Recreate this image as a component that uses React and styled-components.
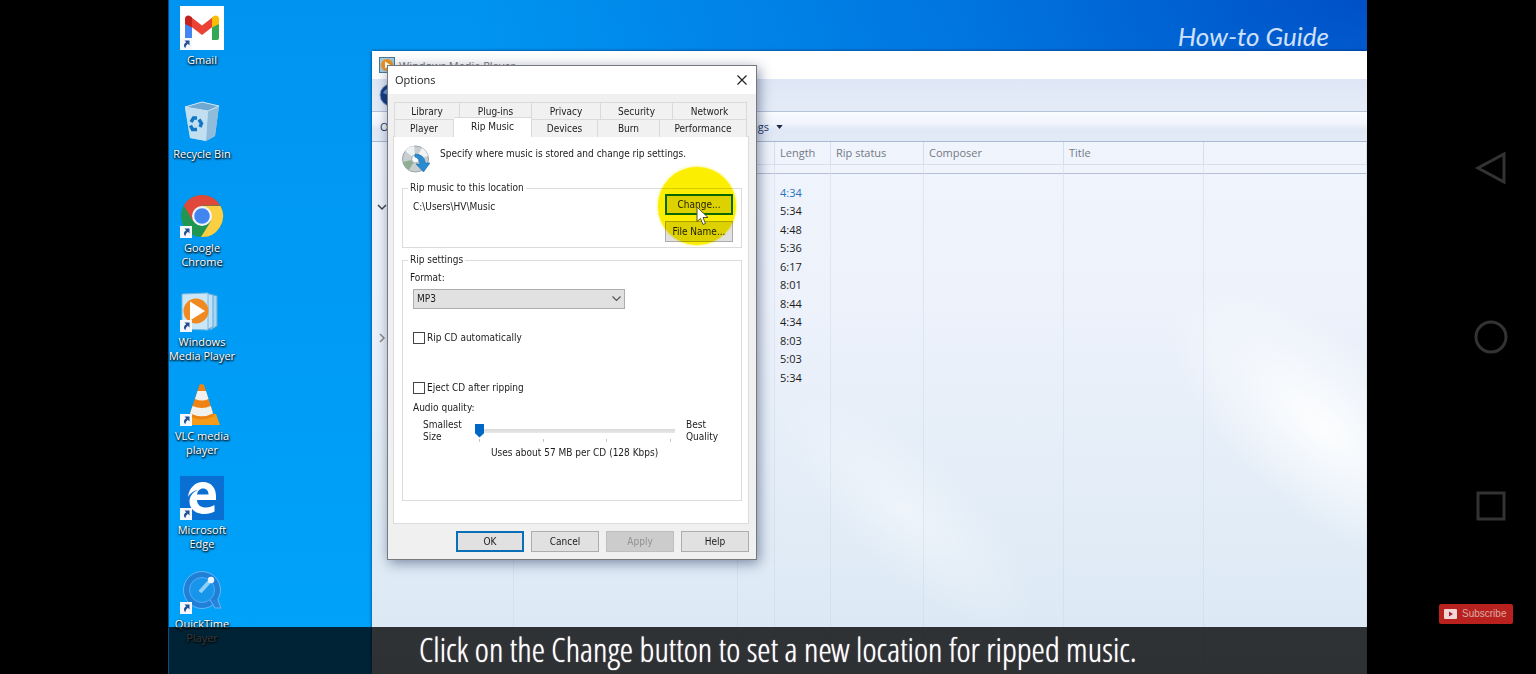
import React from "react";
import styled, { createGlobalStyle, css } from "styled-components";

const GlobalStyle = createGlobalStyle`
  *, *::before, *::after { box-sizing: border-box; }
  body { margin: 0; background: #000; font-family: "Open Sans", "Liberation Sans", sans-serif; }
  button, select, input { font: inherit; margin: 0; }
`;

const uiFont = css`
  font-family: "DejaVu Sans Condensed", "Liberation Sans", sans-serif;
  font-size: 10px;
  line-height: 14px;
  color: #1c1c1c;
`;

/* ---------- page ---------- */

const Screen = styled.div`
  display: grid;
  grid-template-columns: 168px minmax(0, 1fr) 169px;
  min-height: 100vh;
  background: #000;
`;

const Desktop = styled.main`
  grid-column: 2;
  position: relative;
  overflow: hidden;
  border-left: 1px solid #0a4c80;
  background:
    radial-gradient(ellipse 900px 420px at 100% 0, #0050c6, rgba(0, 104, 216, 0.7) 45%, rgba(0, 140, 236, 0) 100%),
    linear-gradient(#0094f0, #00a3fa);
`;

const IconColumn = styled.ul`
  display: flex;
  flex-direction: column;
  width: 66px;
  margin: 0;
  padding: 0;
  list-style: none;
`;

const Shortcut = styled.a`
  display: flex;
  flex-direction: column;
  align-items: center;
  gap: 3px;
  height: 94px;
  padding-top: 6px;
  color: #fff;
  font: 11px/14px "Open Sans", sans-serif;
  text-align: center;
  text-decoration: none;
  text-shadow: 0 1px 2px #000, 1px 1px 2px rgba(0, 0, 0, 0.8);

  svg { flex: none; width: 44px; height: 44px; }
  span { width: 76px; }
`;

const Watermark = styled.div`
  position: absolute;
  top: 20px;
  right: 38px;
  color: #cfe0fb;
  font: italic 26px/32px Lato, sans-serif;
`;

const Caption = styled.p`
  position: absolute;
  z-index: 5;
  inset: auto 0 0;
  margin: 0;
  padding: 2px 0 5px 250px;
  background: rgba(0, 0, 0, 0.79);
  color: #fff;
  font-family: "Open Sans Condensed Light", "Open Sans Condensed", "Roboto Condensed", sans-serif;
  font-size: 34px;
  font-weight: 300;
  line-height: 40px;
  text-shadow: 0 0 1px #fff;
  white-space: nowrap;
`;

/* ---------- media player window ---------- */

const PlayerWindow = styled.section`
  position: absolute;
  inset: 51px 0 0 203px;
  display: flex;
  flex-direction: column;
  overflow: hidden;
  background: linear-gradient(#f2f5fd, #edf2fb 40%, #dae8f4);
  box-shadow: 0 0 3px rgba(0, 30, 90, 0.8);
`;

const Glow = styled.div`
  position: absolute;
  top: ${(p) => p.$top}px;
  left: ${(p) => p.$left}px;
  width: ${(p) => p.$width}px;
  height: ${(p) => p.$height}px;
  background: radial-gradient(closest-side, rgba(255, 255, 255, ${(p) => p.$strength}), rgba(255, 255, 255, 0));
  transform: rotate(42deg);
`;

const PlayerTitle = styled.header`
  display: flex;
  flex: none;
  align-items: center;
  gap: 4px;
  height: 28px;
  padding: 0 7px;
  background: #fff;
  color: #777;
  font-size: 11px;

  svg { width: 16px; height: 16px; }
`;

const PlayerNav = styled.div`
  display: flex;
  flex: none;
  align-items: center;
  height: 33px;
  padding-left: 7px;
  border-bottom: 1px solid #b4c2d8;
  background: linear-gradient(#dfe6f5, #e4ecf8);

  svg { width: 24px; height: 24px; }
`;

const PlayerCommands = styled.div`
  display: flex;
  flex: none;
  height: 30px;
  border-bottom: 1px solid #a9b8ce;
  background: linear-gradient(#fafcff, #f0f4fc 40%, #e1e8f5 60%, #e3eaf7);
`;

const CommandGroup = styled.div`
  display: flex;
  align-items: center;
  justify-content: space-between;
  width: 411px;
  padding-left: 8px;
`;

const Command = styled.button`
  display: flex;
  align-items: center;
  gap: 7px;
  padding: 0;
  border: 0;
  background: none;
  color: #26365c;
  font-size: 11px;

  svg { width: 7px; height: 4px; }
`;

const PlayerBody = styled.div`
  position: relative;
  display: flex;
  flex: 1;
  min-height: 0;
  overflow: hidden;
`;

const Sidebar = styled.div`
  display: flex;
  flex-direction: column;
  gap: 119px;
  width: 142px;
  padding: 59px 0 0 4px;
  border-right: 1px solid #d6e2ef;

  svg { width: 12px; height: 12px; }
`;

const TrackTable = styled.table`
  flex: 1;
  width: 0;
  table-layout: fixed;
  border-collapse: separate;
  border-spacing: 0;
  color: #1b1b1b;
  font-family: "Open Sans", sans-serif;
  font-size: 11px;
  line-height: 18px;
  text-align: left;
`;

const HeadCell = styled.th`
  width: ${(p) => (p.$width ? `${p.$width}px` : "auto")};
  height: 23px;
  padding: 0 5px;
  border-right: 1px solid #d3deee;
  border-bottom: 1px solid #d6dfec;
  color: #737983;
  font-weight: 400;
`;

const BodyCell = styled.td`
  height: ${(p) => p.$height};
  padding: 0 5px;
  border-right: 1px solid rgba(190, 208, 228, 0.35);
  color: ${(p) => (p.$active ? "#2673c0" : "inherit")};
  ${(p) => p.$ruled && "border-bottom: 1px solid #b3c0d6;"}
`;

/* ---------- options dialog ---------- */

const Dialog = styled.section`
  position: absolute;
  z-index: 2;
  top: 65px;
  left: 218px;
  width: 370px;
  border: 1px solid #77797c;
  background: #f0f0f0;
  box-shadow: 2px 3px 12px rgba(20, 40, 80, 0.5);
  ${uiFont}
`;

const DialogTitle = styled.header`
  display: flex;
  align-items: center;
  justify-content: space-between;
  height: 28px;
  padding: 0 8px 0 7px;
  background: #fff;

  h1 { margin: 0; font: 11px/16px "Open Sans", sans-serif; }
`;

const CloseButton = styled.button`
  display: flex;
  padding: 0;
  border: 0;
  background: none;

  svg { width: 12px; height: 12px; }
`;

const Tabs = styled.div`
  padding: 8px 9px 0 6px;
`;

const TabRow = styled.div`
  display: grid;
  grid-template-columns: ${(p) => p.$columns};
  height: 17px;
`;

const Tab = styled.button`
  padding: 0;
  border: 1px solid #dadada;
  border-width: 1px 1px 0 0;
  background: #f1f1f1;
  color: #1c1c1c;
  line-height: 15px;

  &:first-child { border-left-width: 1px; }
  ${(p) =>
    p.$selected &&
    css`
      position: relative;
      height: 20px;
      margin-top: -2px;
      padding-bottom: 3px;
      background: #fff;
    `}
`;

const Panel = styled.div`
  margin: 0 7px 0 5px;
  padding: 8px 6px 22px 8px;
  border: 1px solid #dcdcdc;
  background: #fff;
`;

const Intro = styled.div`
  display: flex;
  gap: 10px;
  height: 37px;

  svg { width: 28px; height: 28px; }
  p { margin: 2px 0 0; }
`;

const Group = styled.fieldset`
  margin: 0 0 6px;
  padding: ${(p) => p.$padding};
  border: 1px solid #dcdcdc;

  &:last-child { margin-bottom: 0; }
  legend { margin-left: 5px; padding: 0 2px; line-height: 12px; }
`;

const Location = styled.div`
  display: flex;
  justify-content: space-between;
  p { margin: 6px 0 0 10px; }
`;

const ButtonStack = styled.div`
  position: relative;
  display: flex;
  flex-direction: column;
  gap: 6px;
`;

const PushButton = styled.button`
  width: 68px;
  height: 21px;
  padding: 0;
  border: ${(p) => (p.$primary ? "2px solid #0b6fb8" : "1px solid #adadad")};
  background: #e1e1e1;
  color: #1c1c1c;

  &:disabled { border-color: #bfbfbf; background: #cccccc; color: #929292; }
`;

const Highlight = styled.span`
  position: absolute;
  top: -27px;
  left: -7px;
  width: 78px;
  height: 78px;
  border-radius: 50%;
  background: #fbee00;
  box-shadow: 0 0 3px #fbee00;
  mix-blend-mode: multiply;
  pointer-events: none;
`;

const Pointer = styled.svg`
  position: absolute;
  top: 12px;
  left: 31px;
  width: 13px;
  height: 20px;
`;

const FormatField = styled.div`
  display: flex;
  flex-direction: column;
  gap: 4px;
  margin-bottom: 22px;

  label { margin-left: 7px; }
`;

const SelectBox = styled.div`
  position: relative;
  width: 212px;
  margin-left: 10px;

  select {
    appearance: none;
    display: block;
    width: 100%;
    height: 20px;
    padding: 0 3px;
    border: 1px solid #adadad;
    border-radius: 0;
    background: #e1e1e1;
    color: #1c1c1c;
  }
  svg { position: absolute; top: 7px; right: 4px; width: 9px; height: 6px; pointer-events: none; }
`;

const CheckRow = styled.label`
  display: flex;
  align-items: center;
  gap: 2px;
  height: 14px;
  margin: 0 0 ${(p) => p.$after}px 10px;

  input {
    appearance: none;
    width: 12px;
    height: 12px;
    border: 1px solid #444;
    background: #fff;
  }
  input:checked { background: #0078d7; }
`;

const QualityLabel = styled.label`
  display: block;
  margin: 0 0 4px 10px;
`;

const QualityRow = styled.div`
  display: grid;
  grid-template-columns: 42px 201px auto;
  gap: 0 10px;
  margin-left: 20px;
  line-height: 12px;

  > span { white-space: pre-line; }
`;

const Slider = styled.input`
  appearance: none;
  display: block;
  width: 200px;
  height: 15px;
  margin: 4px 0 0;
  background: linear-gradient(#d9d9d9, #e9e9e9) center / 100% 4px no-repeat;

  &::-webkit-slider-thumb {
    appearance: none;
    width: 9px;
    height: 14px;
    background: #0067c5;
    clip-path: polygon(0 0, 100% 0, 100% 70%, 50% 100%, 0 70%);
  }
`;

const Ticks = styled.div`
  display: flex;
  justify-content: space-between;
  width: 192px;
  margin: 1px 0 0 4px;

  i { width: 1px; height: 3px; background: #c4c4c4; }
`;

const Estimate = styled.p`
  margin: 3px 0 0 88px;
`;

const DialogFooter = styled.footer`
  display: flex;
  justify-content: flex-end;
  gap: 7px;
  padding: 7px 7px 7px 0;
`;

/* ---------- phone navigation ---------- */

const PhoneBar = styled.aside`
  position: relative;
  grid-column: 3;
`;

const PhoneNav = styled.nav`
  display: grid;
  grid-template-rows: repeat(3, 1fr);
  justify-items: end;
  align-items: center;
  height: 100%;
  padding: 84px 28px;
`;

const NavButton = styled.button`
  display: flex;
  padding: 0;
  border: 0;
  background: none;

  svg { width: 34px; height: 34px; fill: none; stroke: #333; stroke-width: 3; }
`;

const Subscribe = styled.button`
  position: absolute;
  right: 23px;
  bottom: 50px;
  display: flex;
  align-items: center;
  gap: 5px;
  width: 74px;
  height: 20px;
  padding: 0 5px;
  border: 0;
  border-radius: 2px;
  background: #b8211d;
  color: #dba9a7;
  font: 10px/20px "Liberation Sans", sans-serif;

  svg { width: 13px; height: 10px; }
`;

/* ---------- drawings ---------- */

const LinkArrow = () => (
  <g>
    <rect x="0" y="32" width="12" height="12" fill="#f4f8fc" />
    <path d="M4.500 34.500H9.500V39.500L7.800 37.800Q5.600 39.300 5.300 42.300Q2.200 38.800 6.200 36.200Z" fill="#1f4f94" />
  </g>
);

const GmailIcon = () => (
  <svg viewBox="0 0 44 44">
    <rect width="44" height="44" fill="#fff" />
    <path d="M5 17L12 21V34H7Q5 34 5 32Z" fill="#4285f4" />
    <path d="M32 21L39 17V32Q39 34 37 34H32Z" fill="#34a853" />
    <path d="M11 11L22 19.500L33 11V20.500L22 29L11 20.500Z" fill="#ea4335" />
    <path d="M5 18V13Q5 9.500 8.500 9.500Q10 9.500 12 11.500V21.500Z" fill="#c5221f" />
    <path d="M39 18V13Q39 9.500 35.500 9.500Q34 9.500 32 11.500V21.500Z" fill="#fbbc04" />
    <LinkArrow />
  </svg>
);

const BinIcon = () => (
  <svg viewBox="0 0 44 44">
    <path d="M5 7L22 2L39 6L35 36L26 41L10 38Z" fill="#bcdcf0" opacity=".9" />
    <path d="M28 11L39 6L35 36L26 41Z" fill="#90bcdc" />
    <path d="M5 7L22 2L39 6L28 11Z" fill="#6fa9d2" stroke="#cfe6f4" strokeWidth="1" />
    <path d="M5 8L28 11L26 41L10 38Z" fill="#c6e0f0" opacity=".85" />
    <g fill="none" stroke="#1176c4" strokeWidth="3.400">
      <path d="M11 22L13.500 18H17" />
      <path d="M19 19.500L21.500 23.500L20 27" />
      <path d="M17 29.500H12.500L10.500 25.500" />
    </g>
  </svg>
);

const ChromeIcon = () => (
  <svg viewBox="0 0 44 44">
    <circle cx="22" cy="22" r="21" fill="#219653" />
    <path d="M22 22L3.800 11.500A21 21 0 0 1 40.200 11.500H22Z" fill="#e0483c" />
    <path d="M22 12H40.500A21 21 0 0 1 21 43L31 27Z" fill="#fcce41" />
    <path d="M3.800 11.500L13 27L22 12Z" fill="#e0483c" />
    <circle cx="22" cy="22" r="10" fill="#f2f5f8" />
    <circle cx="22" cy="22" r="7.800" fill="#4385f0" />
    <LinkArrow />
  </svg>
);

const MediaIcon = () => (
  <svg viewBox="0 0 44 44">
    <path d="M30 6L37 8V38L30 42Z" fill="#a8d5f2" stroke="#5fa9dc" />
    <path d="M26 5L33 7V39L26 42Z" fill="#bfe0f5" stroke="#5fa9dc" />
    <path d="M2 6L28 5V42L2 41Z" fill="#cbe6f6" stroke="#77b8e2" />
    <circle cx="16" cy="23" r="12.500" fill="#f08a20" />
    <path d="M10 13.500L25 23L10 32.500Z" fill="#fff" />
    <LinkArrow />
  </svg>
);

const VlcIcon = () => (
  <svg viewBox="0 0 44 44">
    <path d="M12 32H36L40 43H9Z" fill="#f59c1c" />
    <path d="M19.500 3Q21.500 1 24 3L34 34Q22 41 9 34Z" fill="#ee8312" />
    <path d="M17.500 9H26L28.500 17Q22 20 15 17Z" fill="#f1f1ef" />
    <path d="M12.500 24Q22 28 30.800 24L33 31.500Q22 37 10 31.500Z" fill="#f1f1ef" />
    <LinkArrow />
  </svg>
);

const EdgeIcon = () => (
  <svg viewBox="0 0 44 44">
    <rect width="44" height="44" fill="#0a6fd2" />
    <path
      d="M8 21C9 12 15 6 23 6C32 6 36 13 36 20V24H17C17 29 21 31.500 26 31.500C29.500 31.500 32 30.500 34.500 29V35.500C32 37 28.500 38 24.500 38C15.500 38 9.500 33 9.500 25.500C9.500 20 13 16 18 14C13.500 14.500 10 17.500 8 21ZM17 18.500H28.500C28.500 15 26.500 12.500 23 12.500C20 12.500 17.500 15 17 18.500Z"
      fill="#fff"
    />
    <LinkArrow />
  </svg>
);

const QuickTimeIcon = () => (
  <svg viewBox="0 0 44 44">
    <circle cx="22" cy="20" r="15.500" fill="#1695ea" stroke="#2080d8" strokeWidth="6" />
    <circle cx="22" cy="20" r="18.500" fill="none" stroke="#6ab5f2" />
    <circle cx="22" cy="20" r="12.500" fill="none" stroke="#5aaaf0" />
    <path d="M30 30L35 38H41L38 30" fill="#2585dc" stroke="#6ab5f2" />
    <path d="M20 22L29 12" stroke="#8fd0fa" strokeWidth="4" />
    <circle cx="31" cy="10" r="3.200" fill="#e8f7ff" />
    <LinkArrow />
  </svg>
);

const PlayerLogo = () => (
  <svg viewBox="0 0 16 16">
    <rect x=".5" y=".5" width="15" height="15" fill="#a9c9dd" stroke="#4b7896" />
    <circle cx="8" cy="8" r="6" fill="#e8921f" />
    <path d="M6 4.500L11.500 8L6 11.500Z" fill="#fff" />
  </svg>
);

const BackOrb = () => (
  <svg viewBox="0 0 24 24">
    <circle cx="12" cy="12" r="11" fill="#143a80" stroke="#8aa2c8" />
    <path d="M4 10A9 9 0 0 1 20 10Q12 14 4 10Z" fill="#6f94cc" />
  </svg>
);

const DiscIcon = () => (
  <svg viewBox="0 0 28 28">
    <circle cx="13.500" cy="14" r="13" fill="#c9ced0" stroke="#9aa2a6" />
    <path d="M13.500 14L3 6A13 13 0 0 1 12 1Z" fill="#eef2f3" />
    <path d="M13.500 14L1 17A13 13 0 0 0 7 25Z" fill="#8fae94" />
    <path d="M13.500 14L20 3A13 13 0 0 1 26 11Z" fill="#f1f3f5" />
    <circle cx="13.500" cy="14" r="4" fill="#f8fafb" stroke="#a5adb1" />
    <path d="M13 9Q22 9 23.500 18H28L21.500 27L14 19H18Q17 13 13 12Z" fill="#2a8bd0" stroke="#1a6bac" strokeWidth=".6" />
  </svg>
);

/* ---------- content ---------- */

const shortcuts = [
  ["Gmail", GmailIcon],
  ["Recycle Bin", BinIcon],
  ["Google Chrome", ChromeIcon],
  ["Windows Media Player", MediaIcon],
  ["VLC media player", VlcIcon],
  ["Microsoft Edge", EdgeIcon],
  ["QuickTime Player", QuickTimeIcon],
];

const columns = [
  ["", 224],
  ["", 37],
  ["Length", 56],
  ["Rip status", 93],
  ["Composer", 140],
  ["Title", 140],
  ["", 0],
];

const lengths = ["4:34", "5:34", "4:48", "5:36", "6:17", "8:01", "8:44", "4:34", "8:03", "5:03", "5:34"];

const Row = ({ value, height, ruled, active }) => (
  <tr>
    {columns.map((_, i) => (
      <BodyCell key={i} $height={height} $ruled={ruled} $active={active}>
        {i === 2 ? value : null}
      </BodyCell>
    ))}
  </tr>
);

function MediaPlayer() {
  return (
    <PlayerWindow aria-label="Windows Media Player">
      <Glow $top={290} $left={760} $width={380} $height={170} $strength={0.9} />
      <Glow $top={400} $left={370} $width={330} $height={120} $strength={0.4} />
      <PlayerTitle><PlayerLogo />Windows Media Player</PlayerTitle>
      <PlayerNav><BackOrb /></PlayerNav>
      <PlayerCommands>
        <CommandGroup>
          <Command>Organize</Command>
          <Command>
            Rip settings
            <svg viewBox="0 0 8 5"><path d="M0 0H8L4 5Z" fill="#1b2745" /></svg>
          </Command>
        </CommandGroup>
      </PlayerCommands>
      <PlayerBody>
        <Sidebar>
          <svg viewBox="0 0 12 12"><path d="M2 4L6 8L10 4" fill="none" stroke="#444" strokeWidth="1.500" /></svg>
          <svg viewBox="0 0 12 12"><path d="M4 2L8 6L4 10" fill="none" stroke="#888" strokeWidth="1.500" /></svg>
        </Sidebar>
        <TrackTable>
          <thead>
            <tr>
              {columns.map(([name, width], i) => (
                <HeadCell key={i} $width={width}>{name}</HeadCell>
              ))}
            </tr>
          </thead>
          <tbody>
            <Row height="9px" ruled />
            <Row height="9px" />
            {lengths.map((value, i) => (
              <Row key={i} value={value} height={i % 2 ? "18px" : "19px"} active={i === 0} />
            ))}
            <Row height="100vh" />
          </tbody>
        </TrackTable>
      </PlayerBody>
    </PlayerWindow>
  );
}

function OptionsDialog() {
  return (
    <Dialog role="dialog" aria-labelledby="options-title">
      <DialogTitle>
        <h1 id="options-title">Options</h1>
        <CloseButton aria-label="Close">
          <svg viewBox="0 0 12 12"><path d="M1.500 1.500L10.500 10.500M10.500 1.500L1.500 10.500" stroke="#222" strokeWidth="1.200" /></svg>
        </CloseButton>
      </DialogTitle>
      <Tabs role="tablist">
        <TabRow $columns="66fr 72fr 69fr 72fr 74fr">
          {["Library", "Plug-ins", "Privacy", "Security", "Network"].map((t) => (
            <Tab key={t} role="tab" aria-selected="false">{t}</Tab>
          ))}
        </TabRow>
        <TabRow $columns="60fr 78fr 66fr 62fr 87fr">
          {["Player", "Rip Music", "Devices", "Burn", "Performance"].map((t) => (
            <Tab key={t} role="tab" aria-selected={t === "Rip Music"} $selected={t === "Rip Music"}>{t}</Tab>
          ))}
        </TabRow>
      </Tabs>
      <Panel role="tabpanel">
        <Intro>
          <DiscIcon />
          <p>Specify where music is stored and change rip settings.</p>
        </Intro>
        <Group $padding="0 8px 5px 0">
          <legend>Rip music to this location</legend>
          <Location>
            <p>C:\Users\HV\Music</p>
            <ButtonStack>
              <PushButton $primary>Change...</PushButton>
              <PushButton>File Name...</PushButton>
              <Highlight />
              <Pointer viewBox="0 0 13 20">
                <path d="M1 1V15.500L4.500 12.500L7 18.500L9.500 17.500L7 11.500H12Z" fill="#fff" stroke="#55531c" />
              </Pointer>
            </ButtonStack>
          </Location>
        </Group>
        <Group $padding="5px 0 40px">
          <legend>Rip settings</legend>
          <FormatField>
            <label htmlFor="format">Format:</label>
            <SelectBox>
              <select id="format"><option>MP3</option></select>
              <svg viewBox="0 0 9 6"><path d="M.5 .5L4.500 4.500L8.500 .5" fill="none" stroke="#555" strokeWidth="1.200" /></svg>
            </SelectBox>
          </FormatField>
          <CheckRow $after={36}><input type="checkbox" />Rip CD automatically</CheckRow>
          <CheckRow $after={6}><input type="checkbox" />Eject CD after ripping</CheckRow>
          <QualityLabel htmlFor="quality">Audio quality:</QualityLabel>
          <QualityRow>
            <span>{"Smallest\nSize"}</span>
            <div>
              <Slider id="quality" type="range" min="0" max="3" defaultValue="0" />
              <Ticks><i /><i /><i /><i /></Ticks>
            </div>
            <span>{"Best\nQuality"}</span>
          </QualityRow>
          <Estimate>Uses about 57 MB per CD (128 Kbps)</Estimate>
        </Group>
      </Panel>
      <DialogFooter>
        <PushButton $primary>OK</PushButton>
        <PushButton>Cancel</PushButton>
        <PushButton disabled>Apply</PushButton>
        <PushButton>Help</PushButton>
      </DialogFooter>
    </Dialog>
  );
}

export default function App() {
  return (
    <>
      <GlobalStyle />
      <Screen>
        <Desktop>
          <IconColumn>
            {shortcuts.map(([name, Icon]) => (
              <li key={name}>
                <Shortcut href="#"><Icon /><span>{name}</span></Shortcut>
              </li>
            ))}
          </IconColumn>
          <Watermark>How-to Guide</Watermark>
          <MediaPlayer />
          <OptionsDialog />
          <Caption>Click on the Change button to set a new location for ripped music.</Caption>
        </Desktop>
        <PhoneBar>
          <PhoneNav>
            <NavButton aria-label="Back"><svg viewBox="0 0 34 34"><path d="M30 3V31L4 17Z" /></svg></NavButton>
            <NavButton aria-label="Home"><svg viewBox="0 0 34 34"><circle cx="17" cy="17" r="15" /></svg></NavButton>
            <NavButton aria-label="Recent apps"><svg viewBox="0 0 34 34"><rect x="4" y="4" width="26" height="26" /></svg></NavButton>
          </PhoneNav>
          <Subscribe>
            <svg viewBox="0 0 13 10"><rect width="13" height="10" rx="1" fill="#f0d6d6" /><path d="M5 2.500L9 5L5 7.500Z" fill="#b01a2a" /></svg>
            Subscribe
          </Subscribe>
        </PhoneBar>
      </Screen>
    </>
  );
}
